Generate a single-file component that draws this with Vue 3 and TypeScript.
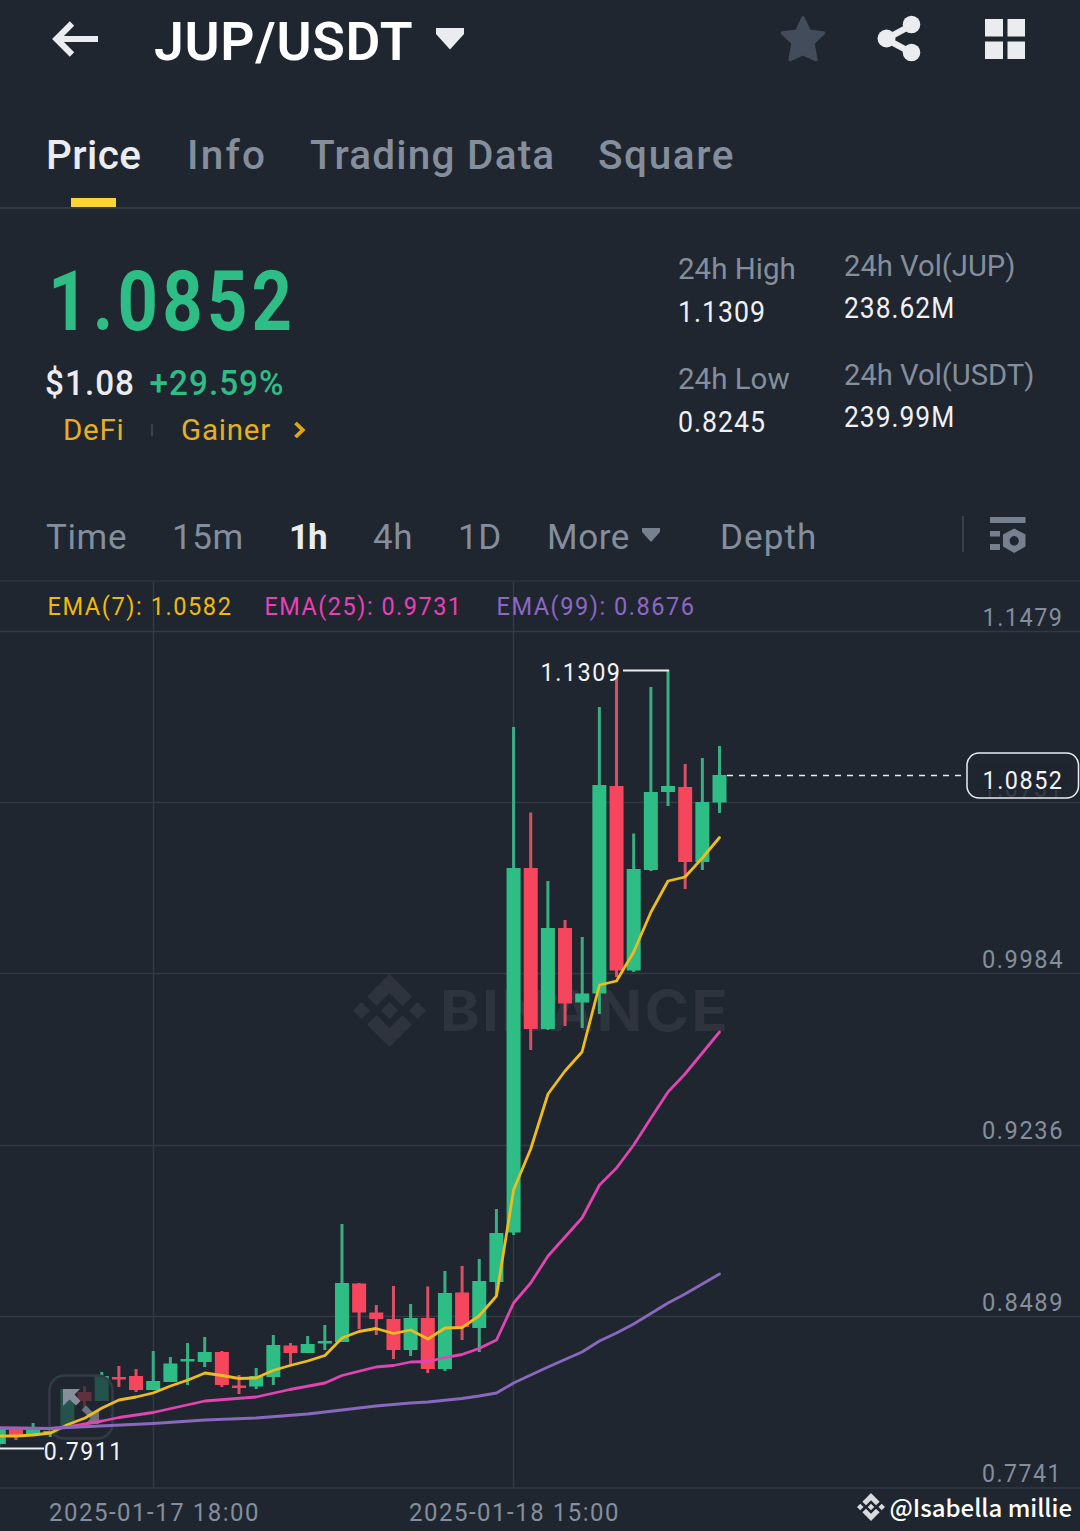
<script setup lang="ts">
type Side = 'up' | 'down'
type Row = [Side, number, number, number, number]

interface Label { text: string; x: number; y: number; w: number }

const tabs = [
  { name: 'Price', cls: 'tab-price', active: true },
  { name: 'Info', cls: 'tab-info', active: false },
  { name: 'Trading Data', cls: 'tab-data', active: false },
  { name: 'Square', cls: 'tab-square', active: false },
]

const stats = [
  [
    { label: '24h High', value: '1.1309' },
    { label: '24h Low', value: '0.8245' },
  ],
  [
    { label: '24h Vol(JUP)', value: '238.62M' },
    { label: '24h Vol(USDT)', value: '239.99M' },
  ],
]

const intervals = [
  { name: 'Time', cls: 'iv-time' },
  { name: '15m', cls: 'iv-15m' },
  { name: '1h', cls: 'iv-1h' },
  { name: '4h', cls: 'iv-4h' },
  { name: '1D', cls: 'iv-1d' },
]

// side, high, body top, body bottom, low
const rows: Row[] = [
  ['up', 1427, 1428, 1444, 1447], ['down', 1429, 1429, 1436, 1440], ['up', 1423, 1430, 1434, 1434],
  ['up', 1430, 1431, 1433, 1437], ['up', 1389, 1389, 1426, 1426], ['down', 1386, 1392, 1401, 1408],
  ['up', 1372, 1376, 1401, 1401], ['down', 1366, 1377, 1379.5, 1387], ['down', 1369, 1376, 1390, 1392],
  ['up', 1351, 1381, 1390, 1390], ['up', 1357, 1363.5, 1382, 1382], ['up', 1343, 1359, 1361.5, 1385],
  ['up', 1337, 1352, 1362, 1367], ['down', 1351, 1352, 1385, 1387], ['down', 1375, 1385.5, 1388, 1394],
  ['up', 1368, 1376, 1386.5, 1389], ['up', 1335, 1345, 1377, 1385], ['down', 1343, 1345.5, 1353, 1364],
  ['up', 1336, 1344, 1353, 1353], ['up', 1325, 1341, 1343.5, 1350], ['up', 1224, 1283, 1342, 1342],
  ['down', 1283, 1283.5, 1312.5, 1329], ['down', 1305, 1312.5, 1319, 1335], ['down', 1286, 1319, 1350, 1359],
  ['up', 1304, 1318, 1350, 1356], ['down', 1286.5, 1318, 1369, 1373], ['up', 1271, 1293, 1369, 1371],
  ['down', 1266, 1292.5, 1327, 1340], ['up', 1259, 1281, 1328, 1352], ['up', 1209, 1233, 1282, 1296],
  ['up', 727, 868, 1232.5, 1235], ['down', 812.5, 868, 1029, 1050], ['up', 881, 928, 1029, 1030],
  ['down', 920, 928, 1003.5, 1026], ['up', 937, 993.5, 1002.5, 1028], ['up', 707, 785, 993.5, 1014],
  ['down', 673, 786, 970.5, 977], ['up', 833.5, 869, 970.5, 972], ['up', 687, 792, 870, 871],
  ['up', 670, 786, 792, 806], ['down', 764, 787, 862, 889], ['up', 758, 802, 862, 870],
  ['up', 746, 775, 802.5, 813],
]

const candles = rows.map(([side, high, top, bottom, low], i) => ({
  side, high, top, bottom, low, x: 719.5 - (42 - i) * 17.16,
}))

const ema7 = '-1,1436 16,1436 33,1435 50.5,1433 68,1424.5 85,1418 102,1408 119,1400 136,1397 153,1393 170.5,1386 188,1380 205,1373 222,1375.5 239,1378.5 256,1378 273,1370.5 290,1365.5 307.6,1361 325,1355.5 342,1338 359,1331.5 376,1328.5 393.5,1333.5 410.6,1330 428,1339 445,1328 462,1327.5 479,1316 496.5,1296 513.6,1190 530.7,1149 548,1094 565,1071 582,1052 599.5,985 616.5,981 633.7,952 651,912 668,881 685,877 702.3,858 719.5,837.5'
const ema25 = '-1,1428 50.5,1428.5 68,1427 102,1421 119,1417.5 153,1412.5 205,1401 256,1397 290,1389.5 325,1383 342,1375.5 376,1367 393.5,1365.5 410.6,1362 428,1361.5 445,1357.5 462,1354.5 479,1348.5 496.5,1340 513.6,1303 530.7,1283 548,1256 582,1218 599.5,1185 616.5,1168 633.7,1145 651,1118 668,1092 685,1074 702.3,1053 719.5,1032'
const ema99 = '-1,1428 50.5,1428.5 68,1427.5 153,1423.5 205,1420 256,1418 307.6,1414 342,1410 376,1406 410.6,1403 428,1402 462,1398.5 479,1396 496.5,1393 513.6,1383 530.7,1375 548,1367 582,1352 599.5,1341 616.5,1333 633.7,1324 668,1303 685,1294 719.5,1274'

const gridRows = [631.5, 802.5, 973.5, 1145.5, 1316.5, 1488]
const gridCols = [153.5, 513.5]

const axis: Label[] = [
  { text: '1.1479', x: 982.5, y: 625.5, w: 81 },
  { text: '0.9984', x: 982, y: 967.5, w: 82 },
  { text: '0.9236', x: 982, y: 1138.5, w: 82 },
  { text: '0.8489', x: 982, y: 1310.5, w: 82 },
  { text: '0.7741', x: 982, y: 1481.5, w: 80 },
  { text: '2025-01-17 18:00', x: 49, y: 1520.5, w: 211 },
  { text: '2025-01-18 15:00', x: 409, y: 1520.5, w: 211 },
]

const legend = [
  { text: 'EMA(7): 1.0582', x: 47.5, w: 185, color: '#f0b90b' },
  { text: 'EMA(25): 0.9731', x: 264.5, w: 198, color: '#eb40b5' },
  { text: 'EMA(99): 0.8676', x: 496.5, w: 199, color: '#8d67c4' },
]
</script>

<template>
  <main class="screen">
    <header class="topbar">
      <svg class="back" width="48" height="38" viewBox="0 0 48 38">
        <path d="M20 3.5 4.5 19 20 34.5M5 19h41" fill="none" stroke="#eaecef" stroke-width="6.2" />
      </svg>
      <h1 class="pair">JUP/USDT</h1>
      <svg class="caret" width="28" height="22" viewBox="0 0 28 22">
        <path d="M0 0h28v6L14 21.5 0 6z" fill="#eaecef" />
      </svg>
      <div class="actions">
        <svg width="46" height="48" viewBox="0 0 46 48">
          <path d="M23 3l6.2 13.4 14.3 1.6-10.7 10.2 3.1 16.3L23 38.700 10.100 44.500l3.100-16.300L2.500 18l14.300-1.600z" fill="#434c5a" stroke="#434c5a" stroke-width="3.600" stroke-linejoin="round" />
        </svg>
        <svg width="44" height="48" viewBox="0 0 44 48">
          <path d="M35 10 9 24l26 14" fill="none" stroke="#eaecef" stroke-width="6.500" />
          <g fill="#eaecef"><circle cx="34.500" cy="9.500" r="8.800" /><circle cx="9.500" cy="23.500" r="9" /><circle cx="34.500" cy="37.500" r="8.800" /></g>
        </svg>
        <svg width="40" height="40" viewBox="0 0 40 40">
          <path d="M0 0h18v17.500H0zM22.500 0H40v17.500H22.500zM0 22.500h18V40H0zM22.500 22.500H40V40H22.500z" fill="#eaecef" />
        </svg>
      </div>
    </header>

    <nav class="tabs">
      <a v-for="t in tabs" :key="t.name" :class="['tab', t.cls, { active: t.active }]">{{ t.name }}</a>
    </nav>

    <section class="summary">
      <div class="quote">
        <div class="last">1.0852</div>
        <div class="fiat"><span class="usd">$1.08</span><span class="change">+29.59%</span></div>
        <div class="tags">
          <span class="tag-defi">DeFi</span>
          <i class="tag-sep"></i>
          <span class="tag-gainer">Gainer</span>
          <svg width="14" height="18" viewBox="0 0 14 18">
            <path d="M2.500 2 9.800 9l-7.300 7" fill="none" stroke="#e0a718" stroke-width="3.800" />
          </svg>
        </div>
      </div>
      <div v-for="(col, i) in stats" :key="i" class="stat-col">
        <dl v-for="s in col" :key="s.label" class="stat">
          <dt>{{ s.label }}</dt>
          <dd>{{ s.value }}</dd>
        </dl>
      </div>
    </section>

    <nav class="intervals">
      <a v-for="iv in intervals" :key="iv.name" :class="['iv', iv.cls]">{{ iv.name }}</a>
      <a class="iv iv-more">More</a>
      <svg class="more-caret" width="18" height="14" viewBox="0 0 18 14"><path d="M0 0h18v4L9 14 0 4z" fill="#76808f" /></svg>
      <a class="iv iv-depth">Depth</a>
      <i class="iv-sep"></i>
      <svg class="iv-settings" width="36" height="36" viewBox="0 0 36 36">
        <g fill="#76808f">
          <path d="M0 0h35.500v6H0zM0 14h10v5.500H0zM0 27h10v6H0z" />
          <path fill-rule="evenodd" d="M24.200 11.500l11.300 6v12l-11.300 6.500-11.200-6.500v-12zM24.200 19a4.600 4.800 0 1 0 .01 0z" />
        </g>
      </svg>
    </nav>

    <svg class="chart" width="1080" height="951" viewBox="0 580 1080 951">
      <path d="M0 580.500H1080" stroke="#2a303b" stroke-width="3" />
      <g stroke="#323a45" stroke-width="1.400">
        <line v-for="y in gridRows" :key="y" x1="0" x2="1080" :y1="y" :y2="y" />
        <line v-for="x in gridCols" :key="x" :x1="x" :x2="x" y1="582" y2="1488" />
      </g>

      <g fill="#2e333e">
        <path d="M389.500 974l22.500 22.500-9.500 9.500-13-13-13 13-9.500-9.500zM389.500 1047l22.500-22.500-9.500-9.500-13 13-13-13-9.500 9.500zM389.500 1002l8.500 8.500-8.500 8.500-8.500-8.500zM361.500 1002l8.500 8.500-8.500 8.500-8.500-8.500zM417.500 1002l8.500 8.500-8.500 8.500-8.500-8.500z" />
        <text class="brand" x="440" y="1031" textLength="290" lengthAdjust="spacingAndGlyphs">BINANCE</text>
      </g>

      <g v-for="c in candles" :key="c.x" :class="c.side">
        <rect class="wick" :x="c.x - 1.5" :y="c.high" width="3" :height="c.low - c.high" />
        <rect class="body" :x="c.x - 7" :y="c.top" width="14" :height="c.bottom - c.top" />
      </g>

      <rect x="49.500" y="1375.500" width="63" height="63" rx="15" fill="#1f2630" fill-opacity=".7" stroke="#343b47" stroke-width="2.500" />
      <g fill="#868e9c">
        <path d="M63 1389h17l-5.500 5.500 6 6.500-4.500 4.500-6.500-6-6.500 6.500z" />
        <path d="M99 1424H85l5.500-5.500-9-8.500 4.500-4.500 8.500 8.500 4.500-4.500z" opacity=".75" />
      </g>

      <g fill="none" stroke-width="2.800" stroke-linejoin="round" stroke-linecap="round">
        <polyline :points="ema7" stroke="#eebc1d" />
        <polyline :points="ema25" stroke="#e045b0" />
        <polyline :points="ema99" stroke="#8a68bd" />
      </g>

      <g class="num" fill="#848e9c">
        <text v-for="a in axis" :key="a.text" :x="a.x" :y="a.y" :textLength="a.w" lengthAdjust="spacingAndGlyphs">{{ a.text }}</text>
      </g>
      <g class="num">
        <text v-for="l in legend" :key="l.text" :x="l.x" y="614.500" :fill="l.color" :textLength="l.w" lengthAdjust="spacingAndGlyphs">{{ l.text }}</text>
      </g>

      <g stroke="#eaecef" fill="none">
        <path d="M623 670.500H669M0 1448.500H44" stroke-width="1.800" />
        <path d="M727 775.500H962" stroke-width="1.500" stroke-dasharray="6 6" />
      </g>
      <text class="num" x="982.500" y="797" fill="#343b46" textLength="81" lengthAdjust="spacingAndGlyphs">1.0731</text>
      <path d="M975 765H1070V790H975z" fill="#1f2630" fill-opacity=".9" />
      <rect x="967" y="753" width="111.500" height="45" rx="12" fill="none" stroke="#eaecef" stroke-width="1.500" />
      <g class="num" fill="#f3f4f6">
        <text x="982.500" y="788.500" textLength="81" lengthAdjust="spacingAndGlyphs">1.0852</text>
        <text x="540.500" y="680.500" textLength="81" lengthAdjust="spacingAndGlyphs">1.1309</text>
        <text x="43.800" y="1459.500" textLength="80" lengthAdjust="spacingAndGlyphs">0.7911</text>
      </g>
    </svg>

    <div class="credit">
      <svg width="28" height="28" viewBox="0 0 73 73">
        <path fill="#d9dade" d="M36.500 0l22.500 22.500-9.500 9.500-13-13-13 13-9.500-9.500zM36.500 73l22.500-22.500-9.500-9.500-13 13-13-13-9.500 9.500zM36.500 28l8.500 8.500-8.500 8.500-8.500-8.500zM8.500 28l8.500 8.500-8.500 8.500-8.500-8.500zM64.500 28l8.500 8.500-8.500 8.500-8.500-8.500z" />
      </svg>
      <span>@Isabella millie</span>
    </div>
  </main>
</template>

<style>
body {
  margin: 0;
  background: #1f2630;
}
</style>

<style scoped>
.screen {
  position: relative;
  width: 1080px;
  height: 1531px;
  overflow: hidden;
  background: #1f2630;
  color: #eaecef;
  font-family: Roboto, "Liberation Sans", sans-serif;
}
svg {
  display: block;
  flex: none;
}
.topbar {
  display: flex;
  align-items: center;
  height: 84px;
  box-sizing: border-box;
  padding: 0 55px 6px 52px;
}
.pair {
  margin: 5px 0 0 54px;
  width: 282px;
  font-size: 53.5px;
  line-height: 64px;
  font-weight: 600;
  letter-spacing: 0.7px;
  color: #fff;
}
.actions {
  display: flex;
  align-items: center;
  margin-left: auto;
}
.actions svg:nth-child(2) {
  margin-left: 51px;
}
.actions svg:nth-child(3) {
  margin-left: 64px;
}
.tabs {
  display: flex;
  height: 123px;
  padding-left: 46px;
  border-bottom: 2px solid #333b46;
}
.tab {
  display: flex;
  flex-direction: column;
  box-sizing: border-box;
  padding-top: 46.5px;
  font-size: 40.5px;
  line-height: 48px;
  font-weight: 500;
  letter-spacing: 1.2px;
  white-space: nowrap;
  color: #848e9c;
}
.tab.active {
  color: #eaecef;
  letter-spacing: 0.4px;
}
.tab.active::after {
  content: "";
  width: 45px;
  height: 9px;
  margin: auto 0 0 25px;
  background: #fcd535;
}
.tab-price { width: 141px; }
.tab-info {
  width: 123px;
  letter-spacing: 2.2px;
}
.tab-data { width: 288px; }
.tab-square { letter-spacing: 1.6px; }
.summary {
  display: flex;
  height: 271px;
}
.quote {
  width: 678px;
}
.last {
  margin: 44px 0 0 48px;
  font-size: 83px;
  line-height: 98px;
  font-weight: 700;
  letter-spacing: 5px;
  color: #2ebd85;
  transform: scaleX(0.85);
  transform-origin: left;
}
.fiat {
  display: flex;
  margin-left: 45px;
  margin-top: 13px;
  font-size: 35px;
  line-height: 40px;
  font-weight: 500;
  letter-spacing: 1.1px;
  transform: scaleX(0.95);
  transform-origin: left;
}
.usd { width: 110px; }
.change { color: #2ebd85; }
.tags {
  display: flex;
  align-items: center;
  margin: 8px 0 0 63px;
  font-size: 29.500px;
  line-height: 36px;
  color: #e6b020;
}
.tag-defi {
  width: 88px;
  letter-spacing: 0.7px;
}
.tag-sep {
  width: 2px;
  height: 12px;
  background: #3a424e;
}
.tag-gainer {
  width: 112px;
  margin-left: 28px;
  letter-spacing: 0.8px;
}
.stat-col {
  width: 166px;
  padding-top: 43px;
}
.stat-col + .stat-col {
  width: 230px;
  padding-top: 40px;
}
.stat {
  height: 110px;
  margin: 0;
  font-size: 29.500px;
  line-height: 34px;
  white-space: nowrap;
}
.stat-col + .stat-col .stat {
  height: 109px;
  font-size: 29.200px;
}
.stat dt {
  color: #848e9c;
}
.stat dd {
  margin: 9px 0 0;
  color: #f0f1f4;
  letter-spacing: 1.1px;
  transform: scaleX(0.905);
  transform-origin: left;
}
.stat-col + .stat-col dd {
  margin-top: 8px;
}
.intervals {
  display: flex;
  align-items: center;
  height: 100px;
  box-sizing: border-box;
  padding: 15px 0 0 46px;
}
.iv {
  font-size: 35px;
  line-height: 42px;
  letter-spacing: 0.6px;
  color: #848e9c;
  white-space: nowrap;
}
.iv-time { width: 126px; }
.iv-15m { width: 117px; }
.iv-1h {
  width: 84px;
  font-weight: 700;
  letter-spacing: -1px;
  color: #eaecef;
}
.iv-4h { width: 85px; }
.iv-1d { width: 89px; }
.iv-more { width: 95px; }
.more-caret {
  margin-bottom: 6px;
}
.iv-depth {
  width: 242px;
  margin-left: 60px;
  letter-spacing: 1.1px;
}
.iv-sep {
  width: 2px;
  height: 36px;
  margin: 0 26px 7px 0;
  background: #38404c;
}
.iv-settings {
  margin-bottom: 6px;
}
.num {
  font-family: Roboto, sans-serif;
  font-size: 26.500px;
  letter-spacing: 1.7px;
}
.brand {
  font-family: Inter, sans-serif;
  font-size: 56px;
  font-weight: 700;
  letter-spacing: 2px;
}
.up .body { fill: #2ebd85; }
.up .wick { fill: #3aae83; }
.down .body { fill: #f6465d; }
.down .wick { fill: #d94f63; }
.credit {
  position: absolute;
  right: 8px;
  bottom: 6px;
  display: flex;
  align-items: center;
  gap: 4px;
  color: #fff;
  font: 500 24px/36px "Noto Sans CJK SC", sans-serif;
  white-space: nowrap;
}
</style>
